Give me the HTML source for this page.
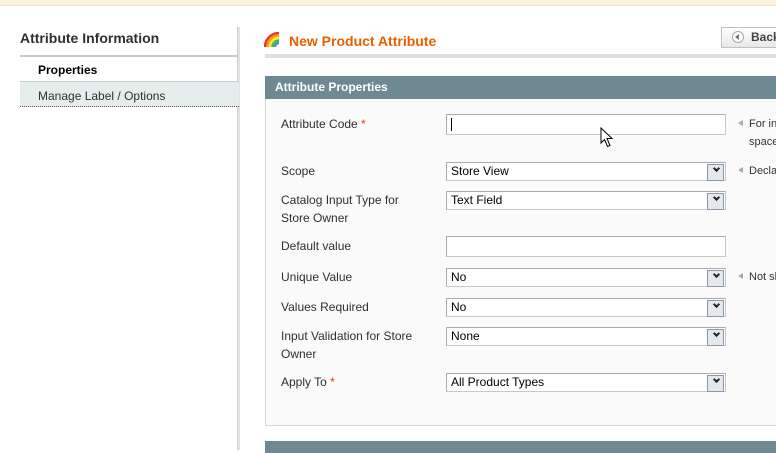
<!DOCTYPE html>
<html><head><meta charset="utf-8"><style>
*{margin:0;padding:0;box-sizing:border-box}
body{width:776px;height:450px;overflow:hidden;background:#fff;font-family:"Liberation Sans",sans-serif;font-size:12px;color:#2f2f2f;position:relative}
.a{position:absolute}
.lbl{position:absolute;left:281px;line-height:18px;width:160px;white-space:nowrap}
.req{color:#eb340a}
.inp{position:absolute;left:446px;width:280px;height:21px;border:1px solid #aaa;border-color:#aaa #c8c8c8 #c8c8c8 #aaa;background:#fff;padding-left:4px;line-height:19px;font-size:12px;color:#000}
.sel{height:19px;line-height:17px}
.sel:after{content:"";position:absolute;right:1px;top:1px;width:15px;height:15px;background:#e3e7ee;border:1px solid #8c97a8}
.sel i{position:absolute;z-index:2;top:3px;right:6px;width:5px;height:5px;border-right:2px solid #222;border-bottom:2px solid #222;transform:rotate(45deg)}
.note{position:absolute;left:738px;color:#333;font-size:11px;line-height:18px;white-space:nowrap}
.note:before{content:"";position:absolute;left:0;top:5px;border-right:5px solid #aaa;border-top:3px solid transparent;border-bottom:3px solid transparent}
.note span{padding-left:11px}
</style></head><body>
<div class="a" style="left:0;top:0;width:776px;height:6px;background:#fbf3e0;border-bottom:1px solid #f3e7c5"></div>
<div class="a" style="left:20px;top:30px;font-weight:bold;font-size:14px;color:#2f2f2f">Attribute Information</div>
<div class="a" style="left:20px;top:55px;width:219px;height:2px;background:#c8c8c8"></div>
<div class="a" style="left:237px;top:27px;width:3px;height:423px;background:#e2e2e2;border-left:1px solid #d0d0d0"></div>
<div class="a" style="left:38px;top:63px;font-weight:bold;color:#000">Properties</div>
<div class="a" style="left:20px;top:81px;width:219px;height:26px;background:#e6eeed;border-top:1px solid #c8cdcc;border-bottom:1px dotted #555"></div>
<div class="a" style="left:38px;top:89px;color:#2f2f2f">Manage Label / Options</div>
<svg class="a" style="left:264px;top:32px" width="17" height="16" viewBox="0 0 17 16">
<path d="M1 15 A14 14 0 0 1 15 1" stroke="#e33" stroke-width="2.5" fill="none"/>
<path d="M3.5 15 A11.5 11.5 0 0 1 15 3.5" stroke="#f90" stroke-width="2.5" fill="none"/>
<path d="M6 15 A9 9 0 0 1 15 6" stroke="#ee3" stroke-width="2.5" fill="none"/>
<path d="M8.5 15 A6.5 6.5 0 0 1 15 8.5" stroke="#4b4" stroke-width="2.5" fill="none"/>
<path d="M11 15 A4 4 0 0 1 15 11" stroke="#58c" stroke-width="2.5" fill="none"/>
</svg>
<div class="a" style="left:289px;top:33px;font-weight:bold;font-size:14px;color:#eb5e00">New Product Attribute</div>
<div class="a" style="left:265px;top:54px;width:511px;height:4px;background:#dfdfdf"></div>
<div class="a" style="left:721px;top:27px;width:60px;height:21px;border:1px solid #c0c0c0;background:linear-gradient(#fff,#e8e8e8);font-weight:bold;font-size:12px;color:#444;line-height:19px;padding-left:29px">Back</div>
<div class="a" style="left:732px;top:31px;width:12px;height:12px;border-radius:50%;border:1px solid #aaa;background:#fff"></div>
<div class="a" style="left:735px;top:34px;border-right:4px solid #777;border-top:3px solid transparent;border-bottom:3px solid transparent"></div>
<div class="a" style="left:265px;top:76px;width:520px;height:23px;background:#6f8992;color:#fff;font-weight:bold;line-height:23px;padding-left:10px">Attribute Properties</div>
<div class="a" style="left:265px;top:99px;width:520px;height:327px;background:#fafafa;border:1px solid #d6d6d6;border-top:none"></div>
<div class="a" style="left:265px;top:441px;width:520px;height:12px;background:#6f8992"></div>

<div class="lbl" style="top:115px">Attribute Code <span class="req">*</span></div>
<div class="inp" style="top:114px"><span style="display:inline-block;width:1px;height:13px;background:#000;margin-top:3px"></span></div>
<div class="note" style="top:115px"><span>For in</span><br><span>space</span></div>
<svg class="a" style="left:600px;top:127px" width="15" height="22" viewBox="0 0 15 22"><path d="M1 1 L1 16 L4.5 12.5 L7.5 19.5 L10 18.5 L7 11.5 L12 11.5 Z" fill="#fff" stroke="#000" stroke-width="1"/></svg>

<div class="lbl" style="top:162px">Scope</div>
<div class="inp sel" style="top:162px">Store View<i></i></div>
<div class="note" style="top:162px"><span>Decla</span></div>

<div class="lbl" style="top:191px">Catalog Input Type for<br>Store Owner</div>
<div class="inp sel" style="top:191px">Text Field<i></i></div>

<div class="lbl" style="top:237px">Default value</div>
<div class="inp" style="top:236px"></div>

<div class="lbl" style="top:268px">Unique Value</div>
<div class="inp sel" style="top:268px">No<i></i></div>
<div class="note" style="top:268px"><span>Not sl</span></div>

<div class="lbl" style="top:298px">Values Required</div>
<div class="inp sel" style="top:298px">No<i></i></div>

<div class="lbl" style="top:327px">Input Validation for Store<br>Owner</div>
<div class="inp sel" style="top:327px">None<i></i></div>

<div class="lbl" style="top:373px">Apply To <span class="req">*</span></div>
<div class="inp sel" style="top:373px">All Product Types<i></i></div>
</body></html>
